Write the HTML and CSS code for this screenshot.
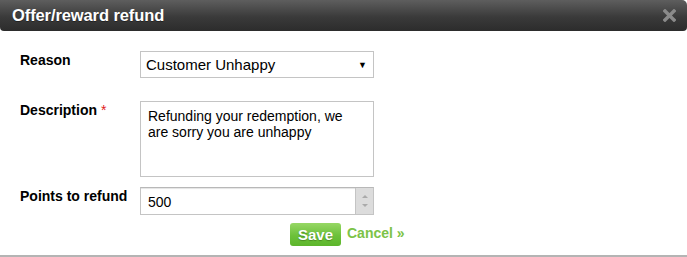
FILE: index.html
```html
<!DOCTYPE html>
<html lang="en">
<head>
    <meta charset="UTF-8">
    <title>Offer/reward refund</title>
    <link rel="stylesheet" href="styles.css">
</head>
<body>
    <div class="dialog">
        <div class="dialog-header">
            <span class="dialog-title">Offer/reward refund</span>
            <svg class="close" width="13" height="13" viewBox="0 0 13 13">
                <path d="M2 2 L11 11 M11 2 L2 11" stroke="#8a8a8a" stroke-width="3.4" stroke-linecap="square"/>
            </svg>
        </div>

        <form class="dialog-body">
            <div class="row">
                <label class="field-label">Reason</label>
                <div class="select">
                    <span>Customer Unhappy</span>
                    <span class="arrow">&#9660;</span>
                </div>
            </div>

            <div class="row">
                <label class="field-label">Description <span class="req">*</span></label>
                <div class="textarea">Refunding your redemption, we are sorry you are unhappy</div>
            </div>

            <div class="row row-tight">
                <label class="field-label">Points to refund</label>
                <div class="number">
                    <span class="number-value">500</span>
                    <span class="spinner">
                        <span class="spin-up"></span>
                        <span class="spin-down"></span>
                    </span>
                </div>
            </div>

            <div class="actions">
                <span class="btn-save">Save</span>
                <a class="cancel">Cancel &raquo;</a>
            </div>
        </form>
    </div>
</body>
</html>
```

FILE: styles.css
```css
body {
    margin: 0;
    font-family: "Liberation Sans", Arial, sans-serif;
    background: #fff;
    color: #000;
}

.dialog {
    width: 687px;
    height: 257px;
    box-sizing: border-box;
    border-bottom: 2px solid #b4b4b4;
}

/* 标题栏 */
.dialog-header {
    height: 31px;
    box-sizing: border-box;
    padding: 0 11px 0 12px;
    display: flex;
    align-items: center;
    justify-content: space-between;
    background: linear-gradient(#5e5e5e, #3a3a3a 55%, #2c2c2c);
    border-radius: 0 5px 4px 4px;
}
.dialog-title {
    color: #fff;
    font-size: 16.5px;
    font-weight: bold;
    letter-spacing: -0.1px;
    text-shadow: 0 1px 0 #222;
    margin-top: -1px;
}
.close {
    display: block;
    margin-top: -1px;
}

/* 表单 */
.dialog-body {
    padding: 20px 0 0 20px;
    margin: 0;
}
.row {
    display: grid;
    grid-template-columns: 120px 234px;
    align-items: start;
    margin-bottom: 23px;
}
.row-tight {
    margin-top: -13px;
    margin-bottom: 8px;
}
.field-label {
    font-size: 14px;
    font-weight: bold;
    padding-top: 1px;
}
.req {
    color: #e02020;
    font-weight: normal;
}

.select,
.textarea,
.number {
    box-sizing: border-box;
    border: 1px solid #c4c4c4;
    font-size: 14px;
    background: #fff;
}
.select {
    height: 27px;
    display: flex;
    align-items: center;
    justify-content: space-between;
    padding: 0 6px 0 5px;
    font-size: 15px;
}
.arrow {
    font-size: 9px;
}
.textarea {
    height: 76px;
    padding: 6px 8px 0 7px;
    line-height: 16px;
}
.number {
    height: 28px;
    display: flex;
    justify-content: space-between;
    border-top-color: #b8b8b8;
    box-shadow: inset 0 2px 1px -1px #e4e4e4;
}
.number-value {
    padding: 6px 0 0 7px;
}
.spinner {
    width: 18px;
    background: #dcdcdc;
    border-left: 1px solid #c4c4c4;
    display: flex;
    flex-direction: column;
    align-items: center;
    justify-content: space-around;
    padding: 4px 0;
    box-sizing: border-box;
}
.spin-up,
.spin-down {
    width: 0;
    height: 0;
    border-left: 3px solid transparent;
    border-right: 3px solid transparent;
}
.spin-up { border-bottom: 3px solid #aaa; }
.spin-down { border-top: 3px solid #aaa; }

/* 按钮 */
.actions {
    display: flex;
    align-items: center;
    gap: 6px;
    padding-left: 270px;
}
.btn-save {
    width: 51px;
    height: 23px;
    line-height: 24px;
    text-align: center;
    box-sizing: border-box;
    border-radius: 3px;
    background: linear-gradient(#97d765, #6cc13a 55%, #5cb52b);
    color: #fff;
    font-size: 15px;
    font-weight: bold;
    text-shadow: 0 1px 1px #4a8a22;
}
.cancel {
    color: #7cc347;
    font-size: 14px;
    font-weight: bold;
    margin-top: -4px;
}
```
